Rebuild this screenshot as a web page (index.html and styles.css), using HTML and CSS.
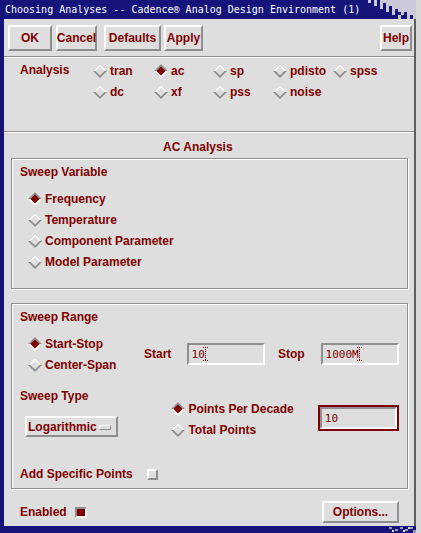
FILE: index.html
```html
<!DOCTYPE html>
<html>
<head>
<meta charset="utf-8">
<title>Choosing Analyses</title>
<link rel="stylesheet" href="styles.css">
</head>
<body>
<div class="frame">
  <div class="titlebar">
    <span class="title">Choosing Analyses -- Cadence® Analog Design Environment (1)</span>
    <svg class="tcorner" viewBox="0 0 54 19">
      <g class="lt">
        <rect x="12" y="0" width="42" height="3"/>
        <rect x="6" y="0" width="3" height="3"/>
        <rect x="18" y="3" width="36" height="3"/>
        <rect x="12" y="3" width="3" height="3"/>
        <rect x="24" y="6" width="30" height="3"/>
        <rect x="18" y="6" width="3" height="3"/>
        <rect x="30" y="9" width="24" height="3"/>
        <rect x="24" y="9" width="3" height="3"/>
        <rect x="39" y="12" width="15" height="3"/>
        <rect x="30" y="12" width="3" height="3"/>
        <rect x="45" y="15" width="9" height="4"/>
        <rect x="36" y="15" width="3" height="4"/>
      </g>
      <g class="dk">
        <rect x="15" y="0" width="3" height="3"/>
        <rect x="21" y="3" width="3" height="3"/>
        <rect x="27" y="6" width="3" height="3"/>
        <rect x="33" y="9" width="3" height="3"/>
        <rect x="42" y="12" width="3" height="3"/>
        <rect x="48" y="15" width="3" height="4"/>
      </g>
    </svg>
  </div>

  <div class="content">
    <div class="btnrow">
      <div class="btn b-ok">OK</div>
      <div class="btn b-cancel">Cancel</div>
      <div class="btn b-defaults">Defaults</div>
      <div class="btn b-apply">Apply</div>
      <div class="btn b-help">Help</div>
    </div>

    <div class="sep"></div>

    <div class="analysis">
      <div class="alabel">Analysis</div>
      <div class="agrid">
        <div class="radio"><svg class="dia" viewBox="0 0 14 14"><polygon class="lo" points="7,0 14,7 7,14 0,7"/><polygon class="hi" points="0,7 7,0 14,7"/><polygon class="in" points="7,2.5 11.5,7 7,11.5 2.5,7"/></svg>tran</div>
        <div class="radio"><svg class="dia on" viewBox="0 0 14 14"><polygon class="lo" points="7,0 14,7 7,14 0,7"/><polygon class="hi" points="0,7 7,0 14,7"/><polygon class="in" points="7,2.5 11.5,7 7,11.5 2.5,7"/></svg>ac</div>
        <div class="radio"><svg class="dia" viewBox="0 0 14 14"><polygon class="lo" points="7,0 14,7 7,14 0,7"/><polygon class="hi" points="0,7 7,0 14,7"/><polygon class="in" points="7,2.5 11.5,7 7,11.5 2.5,7"/></svg>sp</div>
        <div class="radio"><svg class="dia" viewBox="0 0 14 14"><polygon class="lo" points="7,0 14,7 7,14 0,7"/><polygon class="hi" points="0,7 7,0 14,7"/><polygon class="in" points="7,2.5 11.5,7 7,11.5 2.5,7"/></svg>pdisto</div>
        <div class="radio"><svg class="dia" viewBox="0 0 14 14"><polygon class="lo" points="7,0 14,7 7,14 0,7"/><polygon class="hi" points="0,7 7,0 14,7"/><polygon class="in" points="7,2.5 11.5,7 7,11.5 2.5,7"/></svg>spss</div>
        <div class="radio"><svg class="dia" viewBox="0 0 14 14"><polygon class="lo" points="7,0 14,7 7,14 0,7"/><polygon class="hi" points="0,7 7,0 14,7"/><polygon class="in" points="7,2.5 11.5,7 7,11.5 2.5,7"/></svg>dc</div>
        <div class="radio"><svg class="dia" viewBox="0 0 14 14"><polygon class="lo" points="7,0 14,7 7,14 0,7"/><polygon class="hi" points="0,7 7,0 14,7"/><polygon class="in" points="7,2.5 11.5,7 7,11.5 2.5,7"/></svg>xf</div>
        <div class="radio"><svg class="dia" viewBox="0 0 14 14"><polygon class="lo" points="7,0 14,7 7,14 0,7"/><polygon class="hi" points="0,7 7,0 14,7"/><polygon class="in" points="7,2.5 11.5,7 7,11.5 2.5,7"/></svg>pss</div>
        <div class="radio"><svg class="dia" viewBox="0 0 14 14"><polygon class="lo" points="7,0 14,7 7,14 0,7"/><polygon class="hi" points="0,7 7,0 14,7"/><polygon class="in" points="7,2.5 11.5,7 7,11.5 2.5,7"/></svg>noise</div>
      </div>
    </div>

    <div class="sep sep2"></div>

    <div class="heading">AC Analysis</div>

    <div class="group gvar">
      <div class="glabel">Sweep Variable</div>
      <div class="vlist">
        <div class="radio"><svg class="dia on" viewBox="0 0 14 14"><polygon class="lo" points="7,0 14,7 7,14 0,7"/><polygon class="hi" points="0,7 7,0 14,7"/><polygon class="in" points="7,2.5 11.5,7 7,11.5 2.5,7"/></svg>Frequency</div>
        <div class="radio"><svg class="dia" viewBox="0 0 14 14"><polygon class="lo" points="7,0 14,7 7,14 0,7"/><polygon class="hi" points="0,7 7,0 14,7"/><polygon class="in" points="7,2.5 11.5,7 7,11.5 2.5,7"/></svg>Temperature</div>
        <div class="radio"><svg class="dia" viewBox="0 0 14 14"><polygon class="lo" points="7,0 14,7 7,14 0,7"/><polygon class="hi" points="0,7 7,0 14,7"/><polygon class="in" points="7,2.5 11.5,7 7,11.5 2.5,7"/></svg>Component Parameter</div>
        <div class="radio"><svg class="dia" viewBox="0 0 14 14"><polygon class="lo" points="7,0 14,7 7,14 0,7"/><polygon class="hi" points="0,7 7,0 14,7"/><polygon class="in" points="7,2.5 11.5,7 7,11.5 2.5,7"/></svg>Model Parameter</div>
      </div>
    </div>

    <div class="group grange">
      <div class="glabel">Sweep Range</div>
      <div class="rowb">
        <div class="rcol">
          <div class="radio"><svg class="dia on" viewBox="0 0 14 14"><polygon class="lo" points="7,0 14,7 7,14 0,7"/><polygon class="hi" points="0,7 7,0 14,7"/><polygon class="in" points="7,2.5 11.5,7 7,11.5 2.5,7"/></svg>Start-Stop</div>
          <div class="radio"><svg class="dia" viewBox="0 0 14 14"><polygon class="lo" points="7,0 14,7 7,14 0,7"/><polygon class="hi" points="0,7 7,0 14,7"/><polygon class="in" points="7,2.5 11.5,7 7,11.5 2.5,7"/></svg>Center-Span</div>
        </div>
        <div class="flabel">Start</div>
        <div class="field">10<span class="caret"></span></div>
        <div class="flabel stop-label">Stop</div>
        <div class="field">1000M<span class="caret"></span></div>
      </div>
      <div class="rowc">
        <div class="tcol">
          <div class="glabel">Sweep Type</div>
          <div class="menu">Logarithmic<span class="ind"></span></div>
        </div>
        <div class="pcol">
          <div class="radio"><svg class="dia on" viewBox="0 0 14 14"><polygon class="lo" points="7,0 14,7 7,14 0,7"/><polygon class="hi" points="0,7 7,0 14,7"/><polygon class="in" points="7,2.5 11.5,7 7,11.5 2.5,7"/></svg>Points Per Decade</div>
          <div class="radio"><svg class="dia" viewBox="0 0 14 14"><polygon class="lo" points="7,0 14,7 7,14 0,7"/><polygon class="hi" points="0,7 7,0 14,7"/><polygon class="in" points="7,2.5 11.5,7 7,11.5 2.5,7"/></svg>Total Points</div>
        </div>
        <div class="pfield"><div class="field pinner">10</div></div>
      </div>
      <div class="rowd">
        <span>Add Specific Points</span>
        <span class="check"></span>
      </div>
    </div>

    <div class="footer">
      <span>Enabled</span>
      <span class="echeck"></span>
      <div class="btn b-options">Options...</div>
    </div>
  </div>

  <div class="bottombar">
    <svg class="bdither" viewBox="0 0 29 7">
      <g class="lt">
        <rect x="2" y="1" width="3" height="2"/>
        <rect x="8" y="3" width="3" height="2"/>
        <rect x="13" y="1" width="3" height="2"/>
        <rect x="18" y="3" width="3" height="2"/>
        <rect x="23" y="1" width="3" height="2"/>
        <rect x="26" y="4" width="3" height="3"/>
      </g>
      <g class="wt">
        <rect x="5" y="4" width="2" height="2"/>
        <rect x="16" y="4" width="2" height="2"/>
        <rect x="21" y="1" width="2" height="2"/>
      </g>
    </svg>
  </div>
</div>
</body>
</html>
```

FILE: styles.css
```css
* { box-sizing: border-box; }

html, body {
  margin: 0;
  padding: 0;
}

body {
  width: 421px;
  height: 533px;
  overflow: hidden;
  background: #d8d8d8;
  font-family: "Liberation Sans", Arial, sans-serif;
  font-size: 12px;
  font-weight: bold;
  color: #800000;
}

.frame {
  width: 416px;
  height: 533px;
  background: #14147a;
  display: flex;
  flex-direction: column;
}

/* title bar */
.titlebar {
  height: 19px;
  flex: none;
  display: flex;
  align-items: stretch;
}

.title {
  flex: 1;
  padding-left: 5px;
  font-family: "DejaVu Sans Mono", "Liberation Mono", monospace;
  font-weight: normal;
  font-size: 10px;
  line-height: 20px;
  color: #ffffff;
  white-space: nowrap;
  overflow: hidden;
}

.tcorner {
  width: 54px;
  height: 19px;
  flex: none;
  display: block;
}

.tcorner .lt { fill: #c9c9d8; }
.tcorner .dk { fill: #14147a; }

/* main client area */
.content {
  flex: 1;
  margin-left: 4px;
  background: #dedede;
  border-right: 2px solid #5e5e5e;
  display: flex;
  flex-direction: column;
}

.btnrow {
  display: flex;
  margin-top: 6px;
  height: 26px;
}

.btn {
  height: 26px;
  border: 2px solid;
  border-color: #ffffff #8e8e8e #8e8e8e #ffffff;
  display: flex;
  align-items: center;
  justify-content: center;
  line-height: 1;
  white-space: nowrap;
}

.b-ok { width: 44px; margin-left: 4px; }
.b-cancel { width: 41px; margin-left: 4px; }
.b-defaults { width: 57px; margin-left: 7px; }
.b-apply { width: 39px; margin-left: 3px; }
.b-help { width: 32px; margin-left: auto; margin-right: 2px; }

.sep {
  height: 2px;
  margin-top: 5px;
  border-top: 1px solid #8e8e8e;
  border-bottom: 1px solid #ffffff;
}

.sep2 { margin-top: 29px; }

/* analysis selector */
.analysis {
  display: flex;
  margin-top: 2px;
  padding-left: 16px;
}

.alabel {
  width: 73px;
  line-height: 21px;
}

.agrid {
  display: grid;
  grid-template-columns: 61px 59px 60px 60px auto;
  grid-auto-rows: 21px;
}

.radio {
  display: flex;
  align-items: center;
  gap: 3px;
  height: 21px;
  white-space: nowrap;
}

.dia {
  width: 14px;
  height: 14px;
  flex: none;
  display: block;
}

.dia .lo { fill: #8e8e8e; }
.dia .hi { fill: #ffffff; }
.dia .in { fill: #dedede; }
.dia.on .lo { fill: #ffffff; }
.dia.on .hi { fill: #8e8e8e; }
.dia.on .in { fill: #800000; }

.heading {
  margin-top: 6px;
  line-height: 16px;
  padding-left: 159px;
}

/* framed groups */
.group {
  margin: 0 6px 0 7px;
  border: 1px solid #8e8e8e;
  box-shadow: inset 1px 1px 0 #ffffff, 1px 1px 0 #ffffff;
  padding: 5px 8px 0 8px;
}

.glabel { line-height: 16px; }

.gvar {
  margin-top: 3px;
  height: 131px;
}

.vlist {
  margin-top: 8px;
  padding-left: 8px;
}

.grange {
  margin-top: 14px;
  height: 186px;
}

.rowb {
  display: flex;
  align-items: center;
  margin-top: 8px;
}

.rcol {
  width: 117px;
  margin-left: 8px;
}

.flabel { width: 43px; }
.stop-label { margin-left: 13px; }

.field {
  width: 79px;
  height: 22px;
  border: 2px solid;
  border-color: #8e8e8e #ffffff #ffffff #8e8e8e;
  background: #dedede;
  display: flex;
  align-items: center;
  padding-left: 3px;
  font-family: "DejaVu Sans Mono", "Liberation Mono", monospace;
  font-weight: normal;
  font-size: 11px;
  color: #800000;
}

.caret {
  display: inline-block;
  width: 5px;
  height: 14px;
  margin-left: -2px;
  background:
    repeating-linear-gradient(#800000 0 1px, transparent 1px 2px) 2px 0 / 1px 100% no-repeat,
    repeating-linear-gradient(90deg, #800000 0 1px, transparent 1px 2px) 0 0 / 5px 1px no-repeat,
    repeating-linear-gradient(90deg, #800000 0 1px, transparent 1px 2px) 0 100% / 5px 1px no-repeat;
}

.rowc {
  display: flex;
  align-items: flex-start;
  margin-top: 13px;
}

.tcol { width: 153px; }

.menu {
  margin-top: 12px;
  margin-left: 5px;
  width: 93px;
  height: 21px;
  border: 2px solid;
  border-color: #ffffff #8e8e8e #8e8e8e #ffffff;
  display: flex;
  align-items: center;
  padding-left: 1px;
  white-space: nowrap;
}

.ind {
  width: 12px;
  height: 5px;
  margin-left: 2px;
  margin-top: 1px;
  border: 1px solid;
  border-color: #ffffff #8e8e8e #8e8e8e #ffffff;
}

.pcol {
  width: 148px;
  margin-top: 10px;
}

.pfield {
  margin-top: 17px;
  width: 82px;
  height: 26px;
  border: 2px solid #800000;
}

.pinner {
  width: 100%;
  height: 100%;
}

.rowd {
  display: flex;
  align-items: center;
  margin-top: 26px;
  height: 16px;
}

.check {
  width: 11px;
  height: 11px;
  margin-left: 14px;
  border: 2px solid;
  border-color: #ffffff #8e8e8e #8e8e8e #ffffff;
}

/* footer */
.footer {
  display: flex;
  align-items: center;
  margin-top: 12px;
  height: 22px;
  padding-left: 16px;
}

.echeck {
  width: 12px;
  height: 11px;
  margin-left: 8px;
  border: 2px solid;
  border-color: #8e8e8e #ffffff #ffffff #8e8e8e;
  background: #800000;
}

.b-options {
  margin-left: auto;
  margin-right: 15px;
  width: 77px;
  height: 22px;
}

/* bottom frame */
.bottombar {
  height: 7px;
  flex: none;
  display: flex;
  justify-content: flex-end;
}

.bdither {
  width: 29px;
  height: 7px;
  display: block;
}

.bdither .lt { fill: #9a9ab0; }
.bdither .wt { fill: #e0e0e0; }
```
